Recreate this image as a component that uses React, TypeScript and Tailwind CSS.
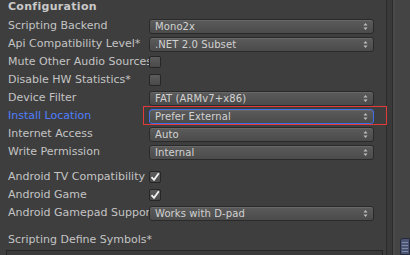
import React from 'react';

const Arrows: React.FC = () => (
  <svg width="5" height="9" viewBox="0 0 5 9" className="shrink-0">
    <path d="M0.5 3.6 L2.5 1 L4.5 3.6 Z" fill="#bdbdbd" />
    <path d="M0.5 5.4 L2.5 8 L4.5 5.4 Z" fill="#bdbdbd" />
  </svg>
);

const Dropdown: React.FC<{ value: string; focused?: boolean }> = ({ value, focused }) => (
  <div
    className={`w-[225px] h-[15px] shrink-0 rounded-[3px] border flex items-center justify-between pl-[5px] pr-[5px] bg-gradient-to-b from-[#5b5b5b] to-[#4b4b4b] shadow-[inset_0_1px_0_#686868] ${
      focused ? 'border-[#3d6ee8]' : 'border-[#2a2a2a]'
    }`}
  >
    <span className="text-[10px] leading-[13px] text-[#d2d2d2] whitespace-nowrap tracking-[0.1px]">{value}</span>
    <Arrows />
  </div>
);

const Checkbox: React.FC<{ checked?: boolean }> = ({ checked }) => (
  <div className="w-[12px] h-[12px] shrink-0 rounded-[2px] border border-[#262626] bg-gradient-to-b from-[#5c5c5c] to-[#4a4a4a] flex items-center justify-center">
    {checked && (
      <svg width="10" height="10" viewBox="0 0 10 10">
        <path d="M1.5 5.2 L4 7.8 L8.8 1.2" stroke="#f2f2f2" strokeWidth="1.8" fill="none" />
      </svg>
    )}
  </div>
);

const Row: React.FC<{ label: string; blue?: boolean; children?: React.ReactNode }> = ({ label, blue, children }) => (
  <div className="h-[18px] flex items-center">
    <div
      className={`w-[149px] shrink-0 pl-[8px] overflow-hidden whitespace-nowrap text-[11px] leading-[14px] ${
        blue ? 'text-[#4f7fff]' : 'text-[#c4c4c4]'
      }`}
    >
      {label}
    </div>
    {children}
  </div>
);

export default function App() {
  return (
    <div
      className="w-[410px] h-[255px] overflow-hidden bg-[#3e3e3e] flex"
      style={{ fontFamily: '"DejaVu Sans", Verdana, sans-serif' }}
    >
      <div className="w-[386px] shrink-0">
        <div className="h-[17px] pl-[8px] text-[11px] leading-[13px] font-bold text-[#c9c9c9] tracking-[0.3px]">
          Configuration
        </div>
        <Row label="Scripting Backend">
          <Dropdown value="Mono2x" />
        </Row>
        <Row label="Api Compatibility Level*">
          <Dropdown value=".NET 2.0 Subset" />
        </Row>
        <Row label="Mute Other Audio Sources">
          <Checkbox />
        </Row>
        <Row label="Disable HW Statistics*">
          <Checkbox />
        </Row>
        <Row label="Device Filter">
          <Dropdown value="FAT (ARMv7+x86)" />
        </Row>
        <div className="relative">
          <Row label="Install Location" blue>
            <Dropdown value="Prefer External" focused />
          </Row>
          <div className="absolute left-[143px] top-[-1px] w-[244px] h-[19px] border-[1.5px] border-[#e03a3a] pointer-events-none" />
        </div>
        <Row label="Internet Access">
          <Dropdown value="Auto" />
        </Row>
        <Row label="Write Permission">
          <Dropdown value="Internal" />
        </Row>
        <div className="h-[7px]" />
        <Row label="Android TV Compatibility">
          <Checkbox checked />
        </Row>
        <Row label="Android Game">
          <Checkbox checked />
        </Row>
        <Row label="Android Gamepad Support Level">
          <Dropdown value="Works with D-pad" />
        </Row>
        <div className="h-[9px]" />
        <div className="h-[18px] flex items-center pl-[8px] text-[11px] leading-[14px] text-[#c4c4c4]">
          Scripting Define Symbols*
        </div>
        <div className="ml-[6px] mt-[1px] w-[377px] h-[20px] border border-[#262626] bg-[#3a3a3a]" />
      </div>
      <div className="w-px shrink-0 bg-[#2c2c2c]" />
      <div className="w-[5px] shrink-0 bg-[#393939]" />
      <div className="w-px shrink-0 bg-[#2a2a2a]" />
      <div className="w-[2px] shrink-0 bg-[#4a4a4a]" />
      <div className="flex-1 bg-[#444444] flex flex-col justify-end items-end">
        <div className="w-[10px] h-[17px] rounded-tl-[3px] border border-[#252a3c] bg-[#4b5573] flex flex-col items-center pt-[3px] gap-[2px]">
          <div className="w-[6px] h-px bg-[#7f8aa8]" />
          <div className="w-[6px] h-px bg-[#7f8aa8]" />
          <div className="w-[6px] h-px bg-[#7f8aa8]" />
          <div className="w-[6px] h-px bg-[#7f8aa8]" />
        </div>
      </div>
    </div>
  );
}
